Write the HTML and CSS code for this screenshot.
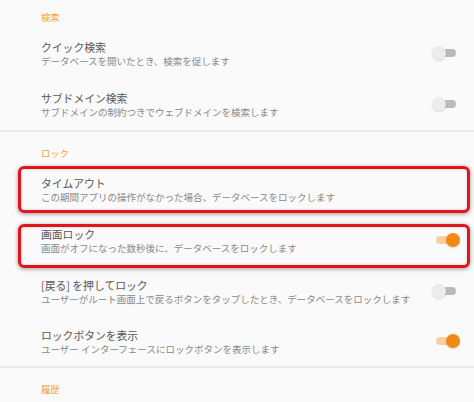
FILE: index.html
```html
<!DOCTYPE html>
<html lang="ja">
<head>
    <meta charset="UTF-8">
    <meta name="viewport" content="width=device-width, initial-scale=1.0">
    <title>設定</title>
    <link rel="stylesheet" href="styles.css">
</head>
<body>

<section class="group first">
    <h3>検索</h3>
    <div class="item">
        <div class="text">
            <p class="title">クイック検索</p>
            <p class="summary">データベースを開いたとき、検索を促します</p>
        </div>
        <span class="switch"><span class="knob"></span></span>
    </div>
    <div class="item">
        <div class="text">
            <p class="title">サブドメイン検索</p>
            <p class="summary">サブドメインの制約つきでウェブドメインを検索します</p>
        </div>
        <span class="switch"><span class="knob"></span></span>
    </div>
</section>

<section class="group">
    <h3>ロック</h3>
    <div class="item marked">
        <div class="text">
            <p class="title">タイムアウト</p>
            <p class="summary">この期間アプリの操作がなかった場合、データベースをロックします</p>
        </div>
    </div>
    <div class="item marked low">
        <div class="text">
            <p class="title">画面ロック</p>
            <p class="summary">画面がオフになった数秒後に、データベースをロックします</p>
        </div>
        <span class="switch on"><span class="knob"></span></span>
    </div>
    <div class="item">
        <div class="text">
            <p class="title">[戻る] を押してロック</p>
            <p class="summary">ユーザーがルート画面上で戻るボタンをタップしたとき、データベースをロックします</p>
        </div>
        <span class="switch"><span class="knob"></span></span>
    </div>
    <div class="item last">
        <div class="text">
            <p class="title">ロックボタンを表示</p>
            <p class="summary">ユーザー インターフェースにロックボタンを表示します</p>
        </div>
        <span class="switch on"><span class="knob"></span></span>
    </div>
</section>

<section class="group">
    <h3>履歴</h3>
</section>

</body>
</html>
```

FILE: styles.css
```css
body { margin: 0; background: #fafafa; font-family: "Noto Sans CJK JP", "Noto Sans", sans-serif; color: #555; }
p { margin: 0; }

.group { border-top: 2px solid #e9e9e9; padding-top: 14px; }
.group.first { border-top: none; padding-top: 10px; }
.group h3 { margin: 0 0 4px; padding-left: 41px; font-size: 9.3px; line-height: 14px; font-weight: normal; color: #f2a03e; }

.item { position: relative; display: flex; align-items: center; height: 51px; padding: 0 18px 0 41px; box-sizing: border-box; }
.item.last { height: 49px; }
.item .text { flex: 1; min-width: 0; padding-top: 1px; }
.title { font-size: 10.8px; line-height: 15px; color: #585858; white-space: nowrap; }
.summary { font-size: 9.5px; line-height: 13px; color: #888; white-space: nowrap; }

.item.marked::after { content: ""; position: absolute; left: 18px; right: 4px; top: 2px; bottom: 2px; border: 3px solid #e3141c; border-radius: 6px; box-shadow: 0 1px 4px rgba(0, 0, 0, 0.4), inset 0 0 3px rgba(0, 0, 0, 0.2); }
.item.marked.low::after { top: 9px; bottom: -2px; }

.switch { position: relative; width: 20px; height: 8px; border-radius: 4px; background: #bababa; margin-top: -2px; flex-shrink: 0; }
.switch .knob { position: absolute; left: -4px; top: -3px; width: 14px; height: 14px; border-radius: 50%; background: #ececec; box-shadow: 0 1px 2px rgba(0, 0, 0, 0.15); }
.switch.on { background: #f9cf9f; }
.switch.on .knob { left: 10px; background: #f28a12; }
```
